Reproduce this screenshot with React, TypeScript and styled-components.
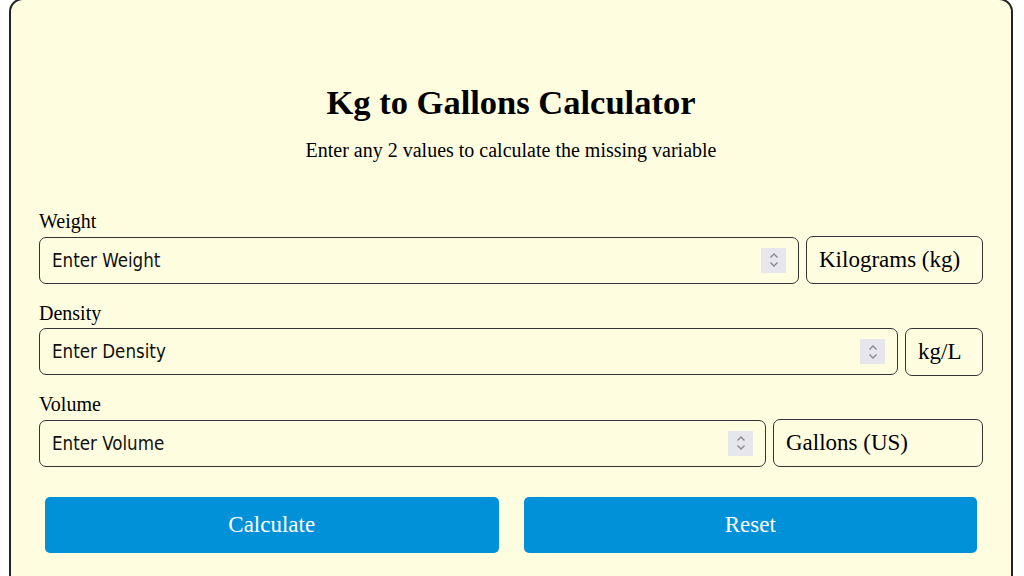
import React from "react";
import styled, { createGlobalStyle } from "styled-components";

const Global = createGlobalStyle`
  html, body {
    margin: 0;
    padding: 0;
    background: #ffffff;
  }
  body {
    font-family: "Liberation Serif", "Times New Roman", serif;
    color: #000000;
  }
`;

const Page = styled.div`
  padding: 0 11px 0 9px;
  margin-top: -2px;
`;

const Card = styled.div`
  background: #fffde0;
  border: 2px solid #222222;
  border-radius: 14px;
  padding: 82px 28px 40px;
  min-height: 560px;
`;

const Title = styled.h1`
  margin: 0;
  font-size: 34.5px;
  font-weight: bold;
  text-align: center;
  line-height: 40px;
`;

const Subtitle = styled.p`
  margin: 17px 0 0;
  font-size: 20px;
  text-align: center;
  line-height: 23px;
`;

const Form = styled.div`
  margin-top: 48px;
  display: flex;
  flex-direction: column;
  gap: 17.5px;
`;

const Field = styled.div`
  display: flex;
  flex-direction: column;
  gap: 3px;
`;

const Label = styled.label`
  font-size: 20px;
  line-height: 23px;
`;

const Row = styled.div`
  display: flex;
  gap: 7px;
  align-items: center;
`;

const InputBox = styled.div`
  flex: 1;
  display: flex;
  align-items: center;
  height: 47px;
  box-sizing: border-box;
  border: 1px solid #333333;
  border-radius: 7px;
  padding: 0 12px 0 12px;
`;

const TextInput = styled.input`
  flex: 1;
  min-width: 0;
  border: none;
  background: transparent;
  outline: none;
  font-family: "DejaVu Sans Condensed", "DejaVu Sans", Tahoma, sans-serif;
  font-stretch: condensed;
  font-size: 18.6px;
  color: #111111;
  padding: 0;
  &::placeholder {
    color: #111111;
    opacity: 1;
  }
`;

const Spinner = styled.div`
  width: 25px;
  height: 25px;
  background: #e6e6ec;
  display: flex;
  align-items: center;
  justify-content: center;
`;

const Unit = styled.div<{ $w: number }>`
  width: ${(p) => p.$w}px;
  height: 48px;
  box-sizing: border-box;
  border: 1px solid #333333;
  border-radius: 7px;
  padding: 0 12px;
  display: flex;
  align-items: center;
  font-size: 23px;
`;

const Buttons = styled.div`
  display: flex;
  gap: 25px;
  padding: 0 6px;
  margin-top: 12px;
`;

const Button = styled.button`
  flex: 1;
  height: 56px;
  border: none;
  border-radius: 5px;
  background: #0091d9;
  color: #ffffff;
  font-family: "Liberation Serif", "Times New Roman", serif;
  font-size: 23px;
  cursor: pointer;
`;

const SpinIcon = () => (
  <svg width="12" height="18" viewBox="0 0 12 18" fill="none">
    <path d="M2.5 6.5 L6 3 L9.5 6.5" stroke="#8a8a8a" strokeWidth="1.4" />
    <path d="M2.5 11.5 L6 15 L9.5 11.5" stroke="#8a8a8a" strokeWidth="1.4" />
  </svg>
);

const fields = [
  { label: "Weight", placeholder: "Enter Weight", unit: "Kilograms (kg)", w: 177 },
  { label: "Density", placeholder: "Enter Density", unit: "kg/L", w: 78 },
  { label: "Volume", placeholder: "Enter Volume", unit: "Gallons (US)", w: 210 },
];

const App = () => {
  return (
    <Page>
      <Global />
      <Card>
        <Title>Kg to Gallons Calculator</Title>
        <Subtitle>Enter any 2 values to calculate the missing variable</Subtitle>
        <Form>
          {fields.map((f) => (
            <Field key={f.label}>
              <Label>{f.label}</Label>
              <Row>
                <InputBox>
                  <TextInput type="text" placeholder={f.placeholder} />
                  <Spinner>
                    <SpinIcon />
                  </Spinner>
                </InputBox>
                <Unit $w={f.w}>{f.unit}</Unit>
              </Row>
            </Field>
          ))}
          <Buttons>
            <Button>Calculate</Button>
            <Button>Reset</Button>
          </Buttons>
        </Form>
      </Card>
    </Page>
  );
};

export default App;
